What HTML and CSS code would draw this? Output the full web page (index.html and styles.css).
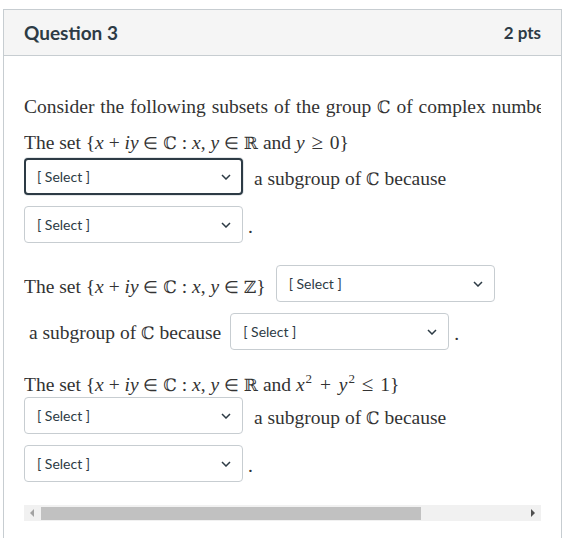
FILE: index.html
```html
<!DOCTYPE html>
<html>
<head>
	<title>Question 3</title>
	<meta charset="utf-8" />
	<link rel="stylesheet" href="styles.css">
</head>
<body>
	<div class="card">
		<div class="card-head">
			<span class="title">Question 3</span>
			<span class="pts">2 pts</span>
		</div>

		<div class="card-body">
			<div class="scroll">
				<div class="wide">

					<div class="txt first">Consider the following subsets of the group <span class="bb">ℂ</span> of complex numbers.</div>
					<div class="txt r-b">The set <span class="math">{<i>x</i> + <i>iy</i> <span class="op">∈</span> <span class="bb">ℂ</span> : <i>x</i>, <i>y</i> <span class="op">∈</span> <span class="bb">ℝ</span> and <i>y</i> <span class="rel">≥</span> 0}</span></div>

					<div class="row r-c">
						<span class="select focus"><span>[ Select ]</span><svg width="10" height="6" viewBox="0 0 10 6"><path d="M1 1l4 4 4-4"/></svg></span>
						<span class="after">a subgroup of <span class="bb">ℂ</span> because</span>
					</div>
					<div class="row r-d">
						<span class="select"><span>[ Select ]</span><svg width="10" height="6" viewBox="0 0 10 6"><path d="M1 1l4 4 4-4"/></svg></span>
						<span class="dot">.</span>
					</div>

					<div class="row r-e">
						<span class="lead">The set <span class="math">{<i>x</i> + <i>iy</i> <span class="op">∈</span> <span class="bb">ℂ</span> : <i>x</i>, <i>y</i> <span class="op">∈</span> <span class="bb">ℤ</span>}</span></span>
						<span class="select"><span>[ Select ]</span><svg width="10" height="6" viewBox="0 0 10 6"><path d="M1 1l4 4 4-4"/></svg></span>
					</div>
					<div class="row r-f">
						<span class="lead indent">a subgroup of <span class="bb">ℂ</span> because</span>
						<span class="select"><span>[ Select ]</span><svg width="10" height="6" viewBox="0 0 10 6"><path d="M1 1l4 4 4-4"/></svg></span>
						<span class="dot">.</span>
					</div>

					<div class="txt r-g">The set <span class="math">{<i>x</i> + <i>iy</i> <span class="op">∈</span> <span class="bb">ℂ</span> : <i>x</i>, <i>y</i> <span class="op">∈</span> <span class="bb">ℝ</span> and <span class="sq"><i>x</i><sup>2</sup> + <i>y</i><sup>2</sup></span> <span class="rel">≤</span> 1}</span></div>
					<div class="row r-h">
						<span class="select"><span>[ Select ]</span><svg width="10" height="6" viewBox="0 0 10 6"><path d="M1 1l4 4 4-4"/></svg></span>
						<span class="after">a subgroup of <span class="bb">ℂ</span> because</span>
					</div>
					<div class="row r-i">
						<span class="select"><span>[ Select ]</span><svg width="10" height="6" viewBox="0 0 10 6"><path d="M1 1l4 4 4-4"/></svg></span>
						<span class="dot">.</span>
					</div>

				</div>
			</div>

			<!-- horizontal scrollbar -->
			<div class="hbar">
				<span class="arrow"><svg width="5" height="8" viewBox="0 0 5 8"><path d="M4 0v8L0 4z" fill="#a3a3a3"/></svg></span>
				<span class="track"><span class="thumb"></span></span>
				<span class="arrow"><svg width="5" height="8" viewBox="0 0 5 8"><path d="M1 0v8l4-4z" fill="#505050"/></svg></span>
			</div>
		</div>
	</div>
</body>
</html>
```

FILE: styles.css
```css
body {
	margin: 9px 0 0 3px;
	background: #fff;
	color: #2d3b45;
}

.card {
	width: 557px;
	height: 528px;
	border: 1px solid #c7cdd1;
	border-bottom: none;
	overflow: hidden;
}

.card-head {
	height: 45px;
	padding: 0 20px;
	display: flex;
	align-items: center;
	justify-content: space-between;
	background: #f5f5f5;
	border-bottom: 1px solid #c7cdd1;
	font-family: Lato, sans-serif;
	font-weight: 700;
}

.title {
	font-size: 19px;
}

.pts {
	font-size: 17px;
}

.card-body {
	padding: 38px 20px 0 20px;
}

.scroll {
	overflow: hidden;
}

.wide {
	width: 660px;
	font-family: "Liberation Serif", serif;
	font-size: 19.5px;
	color: #333;
}

.txt {
	height: 26px;
	line-height: 26px;
	white-space: nowrap;
}

.first {
	word-spacing: 1px;
}

.row {
	display: flex;
	align-items: center;
	white-space: nowrap;
}

.math i {
	font-style: italic;
}

.math .op {
	font-size: 17px;
}

.math .rel {
	font-size: 21px;
	margin: 0 2px;
}

.math .sq {
	word-spacing: 3px;
}

.math sup {
	font-size: 13px;
	line-height: 0;
	vertical-align: 8px;
	margin-left: 1px;
}

.bb {
	font-family: "DejaVu Serif", serif;
	font-size: 17px;
}

.select {
	box-sizing: border-box;
	width: 219px;
	height: 37px;
	padding: 0 11px 0 12px;
	display: flex;
	align-items: center;
	justify-content: space-between;
	background: #fff;
	border: 1px solid #c7cdd1;
	border-radius: 4px;
	font-family: Lato, sans-serif;
	font-size: 14px;
	color: #2d3b45;
}

.select svg path {
	fill: none;
	stroke: #2d3b45;
	stroke-width: 1.5;
}

.select.focus {
	border: 2px solid #2d3b45;
	padding-left: 11px;
	padding-right: 10px;
	box-shadow: 0 0 0 1px #e4e7e9;
}

.after {
	margin-left: 11px;
	padding-top: 5px;
}

.dot {
	margin-left: 5px;
	padding-top: 4px;
}

.lead {
	margin-right: 10px;
	padding-top: 6px;
}

.indent {
	margin-left: 5px;
	margin-right: 9px;
	padding-top: 3px;
}

.r-b { margin-top: 9px; }
.r-c { margin-top: 3px; }
.r-d { margin-top: 11px; }
.r-e { margin-top: 22px; }
.r-f { margin-top: 11px; }
.r-g { margin-top: 21px; }
.r-h { margin-top: 0; }
.r-i { margin-top: 11px; }

.hbar {
	margin-top: 23px;
	height: 16px;
	display: flex;
	background: #f1f1f1;
}

.arrow {
	width: 17px;
	display: flex;
	align-items: center;
	justify-content: center;
}

.track {
	flex: 1;
	padding-top: 2px;
}

.thumb {
	display: block;
	width: 380px;
	height: 13px;
	background: #c1c1c1;
}
```
